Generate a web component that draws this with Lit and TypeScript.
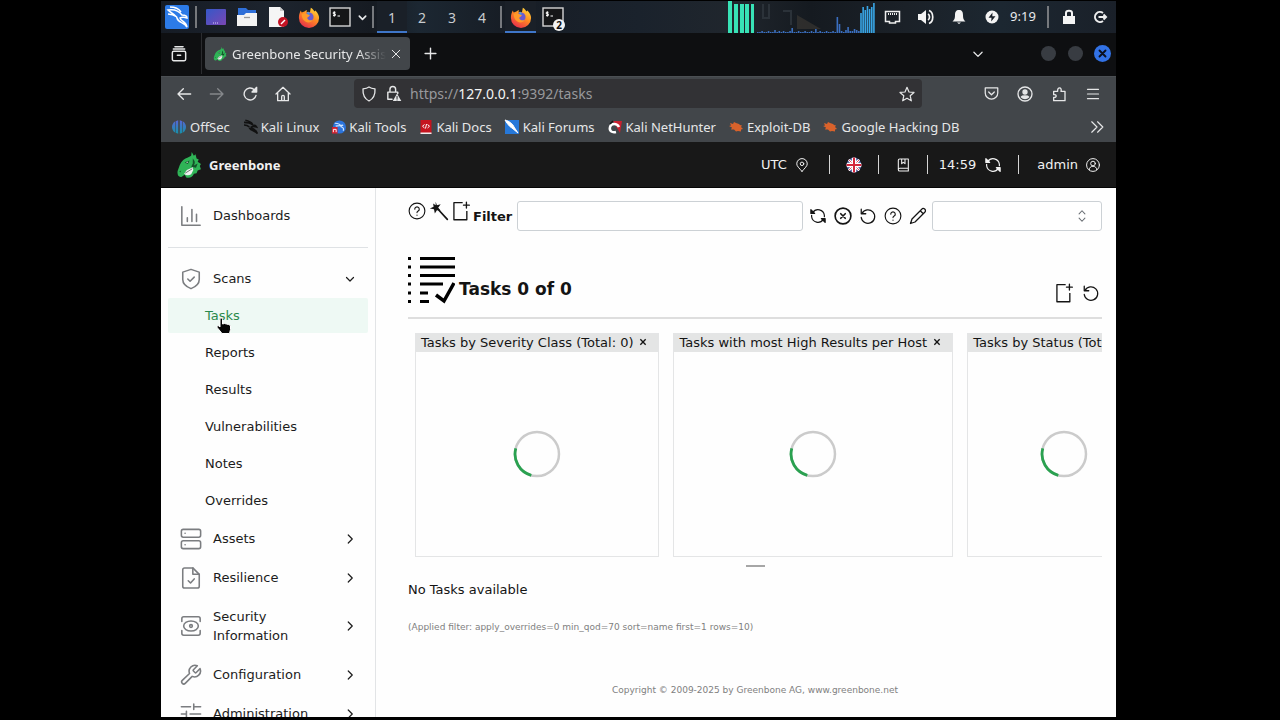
import { LitElement, html, svg, css, nothing } from "lit";
import { customElement, state } from "lit/decorators.js";
import { classMap } from "lit/directives/class-map.js";

const icon = (size: number, body: unknown, width = 2, box = "0 0 24 24", w = size) => html`
  <svg class="icon" width=${w} height=${size} viewBox=${box} fill="none" stroke="currentColor"
    stroke-width=${width} stroke-linecap="round" stroke-linejoin="round" aria-hidden="true">${body}</svg>`;

const chevronDown = svg`<path d="M5 9l7 7 7-7"/>`;
const chevronRight = svg`<path d="M8.500 4l8 8-8 8"/>`;
const refresh = svg`<path d="M20.500 13V11A8.500 8.500 0 0 0 5 7.500M3.500 11v2A8.500 8.500 0 0 0 19 16.500"/><path d="M2.500 3.500v5h5zM21.500 20.500v-5h-5z" fill="currentColor"/>`;
const reset = svg`<path d="M3 3v6h6"/><path d="M4 8.500a9 9 0 1 1-1 5.500"/>`;
const help = svg`<circle cx="12" cy="12" r="10.500"/><path d="M9 9.500a3 3 0 1 1 4.500 2.600c-1 .6-1.500 1-1.500 2M12 17.300v.4"/>`;
const newItem = svg`<path d="M14 2H3.500v20.500H19V12" stroke-linecap="butt"/><path d="M18.500 1.500v7M15 5h7"/>`;

const kaliDragon = svg`<path d="M3 5c5 0 10 1 13 4 3 0 5 1 6 3-3-1-6-1-8 0 1 4 8 3 9 10-3-5-10-4-12-9M5 2c5 1 9 3 11 6M3 9c3 0 6 1 8 3" fill="none"/>`;

const firefox = html`
  <svg class="icon" width="22" height="22" viewBox="0 0 24 24" aria-hidden="true">
    <defs>
      <linearGradient id="ff" x1=".8" y1="0" x2=".2" y2="1">
        <stop offset="0" stop-color="#ffd83c"/><stop offset=".45" stop-color="#ff8a22"/><stop offset="1" stop-color="#e5264f"/>
      </linearGradient>
    </defs>
    <path fill="url(#ff)" d="M3 5l1 2 3-1c1-1 2-1.500 3-1.500L9 7c1-1 3-1 4 0l1-5c2 1 3 3 4 4l1-1c3 3 4 6 4 8a11 11 0 0 1-22 0c0-3 .5-5 2-8z"/>
    <circle cx="12" cy="12" r="5" fill="#6a5bd0"/>
    <path fill="#ff9a2a" d="M4 9c2-2 5-1 7 0l2 1c-1 2-3 2-3 3 1 3 4 3 6 2-1 3-5 4-8 2S4 12 4 9z"/>
    <path fill="#3f9be8" d="M10 6.500l2 .2.800 2.500-2 .4z"/>
  </svg>`;

const terminal = html`
  <svg class="icon" width="22" height="20" viewBox="0 0 22 20" aria-hidden="true">
    <rect x="1" y="1" width="20" height="18" fill="#151618" stroke="#d4d4d4" stroke-width="1.400"/>
    <path d="M6.500 5.300H4.300v1.600h2v1.700H4M5.300 4.300v5.300M8.500 9h2.500" fill="none" stroke="#fff"/>
  </svg>`;

const barHeights = [1, 1, 2, 1, 1, 2, 1, 1, 3, 1, 2, 1, 2, 1, 1, 2, 5, 1, 1, 2, 1, 1, 2, 1, 1, 2, 1, 4, 1, 2, 1, 1, 2, 1, 1, 2, 1, 16, 9, 2, 1, 3, 6, 2, 2, 4, 3, 2, 20, 26, 23, 27, 24, 26, 30];

const bugIcon = html`
  <svg class="icon" width="16" height="16" viewBox="0 0 16 16" aria-hidden="true">
    <path fill="#d9622b" d="M2 4l3 1 1-2 2 1 3 1 1 1 2 .5-1 1.500 2 2-2 .5 0 2-3-.5-2 .5-2-2-3 0 1-2-3-1.500 2-.5z"/>
  </svg>`;

const bookmarks = [
  { label: "OffSec", art: html`<svg class="icon" width="16" height="16" viewBox="0 0 16 16"><defs><linearGradient id="os" x2="0" y2="1"><stop stop-color="#5865d8"/><stop offset="1" stop-color="#1592a8"/></linearGradient></defs><path fill="url(#os)" d="M4 2.500v11C0 11 0 5 4 2.500zM4.600 2.200l2.600-1v13.600l-2.600-1zM8.800 1.200l2.600 1v11.600l-2.600 1zM12 2.500c4 2.500 4 8.500 0 11z"/></svg>` },
  { label: "Kali Linux", art: html`<svg class="icon" width="16" height="16" viewBox="0 0 24 24" fill="none" stroke="#111" stroke-width="2.400">${kaliDragon}</svg>` },
  { label: "Kali Tools", art: html`<svg class="icon" width="15" height="16" viewBox="0 0 16 16"><circle cx="9" cy="8" r="7" fill="#2b74dc"/><path d="M4 4c4 0 6 1 7 4 2 0 3 2 2 4M5 7c3-1 5 0 8-1" fill="none" stroke="#cfe4ff" stroke-width="1.300"/><path fill="#d1202f" d="M1 8h6v7H1z"/><path d="M2.500 13.500v-3h3v3" fill="none" stroke="#fff"/></svg>` },
  { label: "Kali Docs", art: html`<svg class="icon" width="15" height="16" viewBox="0 0 14 16"><path fill="#c5141f" d="M2 1h11v14H2z"/><path fill="#eee" d="M2 13.500h11V15H2z"/><path d="M6 5.500L4 7.200 6 9M9 5.500l2 1.700L9 9M8 5L7 9.500" fill="none" stroke="#fff"/></svg>` },
  { label: "Kali Forums", art: html`<svg class="icon" width="16" height="16" viewBox="0 0 16 16"><path fill="#2678d9" d="M1 1h14v14H1z"/><path d="M1 1c4 1 8 4 9 7l4 6-6-5C6 8 4 6 1 1z" fill="#fff" stroke="#fff"/></svg>` },
  { label: "Kali NetHunter", art: html`<svg class="icon" width="16" height="16" viewBox="0 0 16 16"><path fill="#c8202f" d="M6 2h9l-2 12z"/><path d="M12 8C10 4 4 4 3 8s2 6 6 5" fill="none" stroke="#fff" stroke-width="2.500"/><path d="M3 5l3-3" stroke="#111" stroke-width="1.500"/></svg>` },
  { label: "Exploit-DB", art: bugIcon },
  { label: "Google Hacking DB", art: bugIcon },
];

const greenboneLogo = (size: number) => html`
  <svg class="icon" width=${size} height=${size} viewBox="0 0 24 24" aria-hidden="true">
    <path fill="#2fb457" d="M14.500 0l2 3.500L18 2l1 4 2 1-1 2 3 2-1 2 1 3-3 1-1 2.500-2.500.5c-1 3-4 4.500-7 3.500L8 21l-3 2c-3 .5-4-2.500-3.500-5.500L3.500 12C5 8 8 6 11 5l3-1.500z"/>
    <path fill="#14522a" d="M15.500 6c2 2 2.500 4 1 6.500l3.500-2-1.500 4-4.500-1 1.500-3z"/>
    <path fill="#14522a" d="M8 9.800l4.500-2-1.500 3.200z"/>
    <path fill="#fff" d="M9.300 9.600l2-.9-.9 1.500z"/>
    <path fill="#f0f0f0" d="M7.500 20l2.500-3.500 5.500-2.500.5 2.500-2 4c-2 1.500-4.500 1.500-6.500-.5z"/>
    <path d="M8.500 19.500l6.500-4" stroke="#5a6a60" stroke-width=".8"/>
    <path fill="#14522a" d="M3 18l1.800-1-.8 2z"/>
  </svg>`;

const scanPages = ["Tasks", "Reports", "Results", "Vulnerabilities", "Notes", "Overrides"];

const sections = [
  { label: "Assets", art: svg`<rect x="1.500" y="1.500" width="21" height="8.500" rx="2"/><rect x="1.500" y="14" width="21" height="8.500" rx="2"/><path d="M5.500 5.800h.1M5.500 18.300h.1"/>` },
  { label: "Resilience", art: svg`<path d="M14 1H5a2 2 0 0 0-2 2v18a2 2 0 0 0 2 2h14a2 2 0 0 0 2-2V8z"/><path d="M14 1v7h7M9 15l2.500 2.500L15.500 13"/>` },
  { label: "Security Information", art: svg`<path d="M2 7V4a2 2 0 0 1 2-2h16a2 2 0 0 1 2 2v3M2 17v3a2 2 0 0 0 2 2h16a2 2 0 0 0 2-2v-3"/><ellipse cx="12" cy="12" rx="8" ry="5.500"/><circle cx="12" cy="12" r="1.500"/>` },
  { label: "Configuration", art: svg`<path d="M14.700 6.300a1 1 0 0 0 0 1.400l1.600 1.600a1 1 0 0 0 1.400 0l4.200-4.200a6.500 6.500 0 0 1-8.600 8.400l-7.600 7.600a2.100 2.100 0 0 1-3.200-3.200l7.900-7.600a6.500 6.500 0 0 1 8.500-8.400z"/>` },
  { label: "Administration", art: svg`<path d="M1.500 4h10M15 4h7.500M15 1v6M1.500 12H7M11 12h11.500M7 9v6M1.500 20h13M18 20h4.500M18 17v6"/>` },
];

const charts = [
  "Tasks by Severity Class (Total: 0)",
  "Tasks with most High Results per Host",
  "Tasks by Status (Total: 0)",
];

@customElement("desktop-panel")
export class DesktopPanel extends LitElement {
  static styles = css`
    :host { display: flex; align-items: stretch; height: 32px; flex: none; color: #e8eaec; overflow: hidden; font: 14px "Noto Sans", sans-serif;
      background: linear-gradient(90deg, #161c25 0, #1d242e 12%, #161b22 22%, #1c2732 27%, #171d25 36%, #1a222c 50%, #20262d 60%, #151a20 68%, #1b2128 78%, #1c2731 88%, #1a2029 100%); }
    button { display: flex; align-items: center; justify-content: center; position: relative; border: 0; padding: 0; background: none; color: inherit; font: inherit; }
    .cell { width: 31px; }
    .narrow { width: 14px; }
    .desk { width: 30px; color: #c9ccd0; }
    .tray { width: 33px; }
    .active { box-shadow: inset 0 -2px #3f76c8; background: #1a2028; }
    .sep { width: 2px; margin: 5px 3px; background: #76797d; }
    .space { flex: 1; }
    .icon { display: block; flex: none; }
    .badge { position: absolute; right: 4px; bottom: 2px; width: 12px; height: 12px; border-radius: 6px; background: #f4f4f4; color: #111; font-size: 10px; line-height: 12px; font-weight: 700; }
    time { width: 30px; margin-right: 6px; text-align: center; line-height: 31px; font-size: 13px; }
  `;
  render() {
    return html`
      <button class="cell" aria-label="Applications">
        <svg class="icon" width="26" height="26" viewBox="0 0 26 26"><rect x="1" y="1" width="24" height="24" rx="2" fill="#2c7be8"/><path d="M4 6c6-1 11 1 14 5 3 0 5 1 5 3-3-1-5-1-7 0 0 3 6 3 7 9-3-5-9-4-10-9-1-3-6-5-9-8zM6 3c5 0 9 2 11 5M4 10c4 0 6 1 9 3" fill="none" stroke="#fff" stroke-width="1.500"/></svg>
      </button>
      <span class="sep"></span>
      <button class="cell" aria-label="Show desktop">
        <svg class="icon" width="22" height="18" viewBox="0 0 22 18"><defs><linearGradient id="sd" x2="1" y2="1"><stop stop-color="#3558c8"/><stop offset="1" stop-color="#7a46b4"/></linearGradient></defs><rect x="1" y="1" width="20" height="16" rx="1" fill="url(#sd)"/><path d="M8 15h6" stroke="#d8d0ff" stroke-dasharray="1 1"/></svg>
      </button>
      <button class="cell" aria-label="Files">
        <svg class="icon" width="22" height="20" viewBox="0 0 22 20"><path fill="#2f6fd8" d="M2 1h8l2 2h8v8H2z"/><path fill="#f3f3f3" d="M1 8h7l2-2h11v13H1z"/><path d="M8 10.500h6" stroke="#999" stroke-width="1.300"/></svg>
      </button>
      <button class="cell" aria-label="Text editor">
        <svg class="icon" width="20" height="22" viewBox="0 0 20 22"><path fill="#f5f5f5" d="M1 1h11l4 4v16H1z"/><path fill="#c9c9c9" d="M12 1l4 4h-4z"/><circle cx="15" cy="16" r="5" fill="#c41324"/><path d="M13 18l4-4" stroke="#fff" stroke-width="1.500"/></svg>
      </button>
      <button class="cell" aria-label="Firefox">${firefox}</button>
      <button class="cell" aria-label="Terminal">${terminal}</button>
      <button class="narrow" aria-label="More terminals">${icon(11, chevronDown, 3.5)}</button>
      <span class="sep"></span>
      ${[1, 2, 3, 4].map((n) => html`<button class=${classMap({ desk: true, active: n === 1 })}>${n}</button>`)}
      <span class="sep"></span>
      <button class="cell active" aria-label="Firefox window">${firefox}</button>
      <button class="tray" aria-label="Terminal windows">${terminal}<span class="badge">2</span></button>
      <span class="space"></span>
      <svg class="icon" width="149" height="32" viewBox="0 0 149 32" aria-hidden="true">
        <path fill="#38e2b6" d="M1 0h4v32H1zM7 3h4v29H7zM13 3h4v29h-4zM18 3h4v29h-4zM24 3h3v29h-3z"/>
        <path d="M36 3v14h6V3M56 10h8v14" fill="none" stroke="#2b3239" stroke-width="2"/>
        <path fill="#463f38" opacity=".5" d="M70 14l24 14H70z"/>
        ${barHeights.map((h, i) => svg`<rect x=${30 + i * 2.15} y=${32 - h} width="1.600" height=${h} fill=${h > 18 ? "#39a6e6" : "#3b6fc0"}/>`)}
      </svg>
      <button class="tray" aria-label="Network">
        <svg class="icon" width="17" height="15" viewBox="0 0 17 15"><path d="M1.500 1.500h14v10h-4v1.500h-6v-1.500h-4z" fill="none" stroke="#eee" stroke-width="1.500"/><path d="M4 4h9" stroke="#eee" stroke-width="2" stroke-dasharray="1 1"/></svg>
      </button>
      <button class="tray" aria-label="Volume">
        <svg class="icon" width="18" height="16" viewBox="0 0 18 16"><path fill="#f4f4f4" d="M1 5h3l5-4v14l-5-4H1z"/><path d="M11 5c2 1 2 5 0 6M12 1.500c5 2 5 11 0 13" fill="none" stroke="#f4f4f4" stroke-width="1.700"/></svg>
      </button>
      <button class="tray" aria-label="Notifications">
        <svg class="icon" width="14" height="16" viewBox="0 0 14 16"><path fill="#f4f4f4" d="M7 1c3 0 4 2 4 5 0 4 1 5 2.500 6.500H.5C2 11 3 10 3 6c0-3 1-5 4-5zM5 13.500h4L7 15z"/></svg>
      </button>
      <button class="tray" aria-label="Power">
        <svg class="icon" width="14" height="14" viewBox="0 0 14 14"><circle cx="7" cy="7" r="6.500" fill="#f4f4f4"/><path fill="#1a2028" d="M7.500 2.500L3.500 7.800h3L6.200 11.500l4.300-5.300H7.300z"/></svg>
      </button>
      <time>9:19</time>
      <span class="sep"></span>
      <button class="tray" aria-label="Lock">
        <svg class="icon" width="14" height="16" viewBox="0 0 14 16"><path fill="#f4f4f4" d="M1 7h12v8H1z"/><path d="M4 8V4c0-3 6-3 6 0v4" fill="none" stroke="#f4f4f4" stroke-width="2"/></svg>
      </button>
      <button class="cell" aria-label="Log out">
        <svg class="icon" width="15" height="14" viewBox="0 0 15 14"><path d="M10 3a5 5 0 1 0 0 8M5.500 7H13M10.500 4.500L13 7l-2.500 2.500" fill="none" stroke="#eee" stroke-width="2"/></svg>
      </button>`;
  }
}

@customElement("browser-chrome")
export class BrowserChrome extends LitElement {
  static styles = css`
    :host { display: block; flex: none; font: 13px "Noto Sans", sans-serif; color: #e6e7e8; }
    button { display: flex; align-items: center; justify-content: center; border: 0; padding: 0; background: none; color: inherit; font: inherit; }
    .icon { display: block; flex: none; }
    .tabs { display: flex; align-items: center; height: 43px; padding-bottom: 2px; box-sizing: border-box; background: #0e0f11; }
    .history { align-self: stretch; width: 41px; border-right: 1px solid #2b2c2f; padding-right: 4px; margin-right: 3px; }
    .tab { display: flex; align-items: center; width: 205px; height: 33px; border-radius: 4px; background: #42464a; box-sizing: border-box; padding: 0 9px 0 8px; gap: 5px; }
    .title { flex: 1; min-width: 0; overflow: hidden; white-space: nowrap; -webkit-mask-image: linear-gradient(90deg, #000 82%, transparent); mask-image: linear-gradient(90deg, #000 82%, transparent); }
    .new { width: 40px; height: 33px; }
    .space { flex: 1; }
    .list { width: 28px; margin-right: 43px; }
    .win { width: 27px; }
    .dot { width: 15px; height: 15px; border-radius: 8px; background: #383c42; }
    .dot.close { display: flex; align-items: center; justify-content: center; width: 17px; height: 17px; border-radius: 9px; background: #3272e6; color: #0a1020; }
    .nav { display: flex; align-items: center; height: 36px; background: #42464a; padding: 0 6px 1px; box-shadow: inset 0 1px #4b4f53; box-sizing: border-box; }
    .tool { width: 33px; height: 29px; }
    .right .tool { width: 34px; }
    .right { display: flex; }
    .dim { color: #85888b; }
    .address { flex: 1; min-width: 0; display: flex; align-items: center; gap: 8px; height: 29px; margin: 0 52px 0 55px; padding: 0 7px; border-radius: 4px; background: #323235; box-sizing: border-box; }
    .url { flex: 1; color: #98999c; font-size: 14px; white-space: nowrap; }
    .url b { font-weight: 400; color: #f4f4f4; }
    .marks { display: flex; align-items: center; gap: 12px; height: 30px; padding: 0 12px 1px 10px; box-sizing: border-box; background: #42464a; }
    .marks a { display: flex; align-items: center; gap: 3px; color: inherit; text-decoration: none; white-space: nowrap; }
  `;
  render() {
    return html`
      <div class="tabs">
        <button class="history" aria-label="Recent browsing">${icon(16, svg`<rect x="2" y="8" width="20" height="14" rx="2"/><path d="M3.500 4.500h17M6 1h12M9.500 14h5"/>`, 2.2)}</button>
        <div class="tab">
          ${greenboneLogo(14)}<span class="title">Greenbone Security Assistant</span>
          <button aria-label="Close tab">${icon(10, svg`<path d="M3 3l18 18M21 3L3 21"/>`, 2.4)}</button>
        </div>
        <button class="new" aria-label="New tab">${icon(13, svg`<path d="M12 2v20M2 12h20"/>`, 2.6)}</button>
        <span class="space"></span>
        <button class="list" aria-label="List all tabs">${icon(14, chevronDown, 2.2)}</button>
        <button class="win" aria-label="Minimize"><span class="dot"></span></button>
        <button class="win" aria-label="Maximize"><span class="dot"></span></button>
        <button class="win" aria-label="Close"><span class="dot close">${icon(9, svg`<path d="M4 4l16 16M20 4L4 20"/>`, 5)}</span></button>
      </div>
      <div class="nav">
        <button class="tool" aria-label="Back">${icon(16, svg`<path d="M22 12H3M11 4l-8 8 8 8"/>`, 2)}</button>
        <button class="tool dim" aria-label="Forward">${icon(16, svg`<path d="M2 12h19M13 4l8 8-8 8"/>`, 2)}</button>
        <button class="tool" aria-label="Reload">${icon(16, svg`<path d="M21 14a9 9 0 1 1-2.500-8.500L21 8"/><path d="M22 2v7h-7z" fill="currentColor"/>`, 2)}</button>
        <button class="tool" aria-label="Home">${icon(16, svg`<path d="M1.500 12L12 2l10.500 10M4 10.500V22h16V10.500M10 22v-6a2 2 0 0 1 4 0v6"/>`, 2)}</button>
        <div class="address">
          ${icon(16, svg`<path d="M12 1.500c3 2 6 2.500 9 2.800C21.500 13 19 19 12 22.500 5 19 2.500 13 3 4.300c3-.3 6-.8 9-2.800z"/>`, 2)}
          ${icon(17, svg`<path d="M10 20H4V10h14v2M7 10V6a4 4 0 0 1 8 0v4"/><path d="M17 12l6 10.500H11z" fill="currentColor" stroke="none"/><path d="M17 16v3M17 20.800v.2" stroke="#323235" stroke-width="1.500"/>`, 2)}
          <span class="url">https://<b>127.0.0.1</b>:9392/tasks</span>
          <button aria-label="Bookmark this page">${icon(16, svg`<path d="M12 2l3 7 7.500.7-5.700 5 1.700 7.500L12 18.300 5.500 22.200l1.700-7.500-5.700-5L9 9z"/>`, 1.8)}</button>
        </div>
        <div class="right">
          <button class="tool" aria-label="Pocket">${icon(15, svg`<path d="M2 3h20v8a10 10 0 0 1-20 0z"/><path d="M7.500 9.500L12 14l4.500-4.500"/>`, 2)}</button>
          <button class="tool" aria-label="Account">${icon(16, svg`<circle cx="12" cy="12" r="10.500"/><circle cx="12" cy="9" r="3" fill="currentColor"/><path d="M6.500 16.500c1-2 10-2 11 0-2 3-9 3-11 0z" fill="currentColor"/>`, 2)}</button>
          <button class="tool" aria-label="Extensions">${icon(16, svg`<path d="M4 22V17c5 1 5-5 0-4V8h6C9 1 17 1 15 8h6v14z"/>`, 2)}</button>
          <button class="tool" aria-label="Menu">${icon(14, svg`<path d="M2.500 4h19M2.500 12h19M2.500 20h19"/>`, 2)}</button>
        </div>
      </div>
      <div class="marks">
        ${bookmarks.map((b) => html`<a href="#">${b.art}${b.label}</a>`)}
        <span class="space"></span>
        <button aria-label="More bookmarks">${icon(14, svg`<path d="M3 3l9 9-9 9M13 3l9 9-9 9"/>`, 2)}</button>
      </div>`;
  }
}

@customElement("gsa-sidebar")
export class GsaSidebar extends LitElement {
  static styles = css`
    :host { display: block; flex: none; width: 214px; box-sizing: content-box; border-right: 1px solid #e2e4e6; overflow: hidden; }
    nav { padding: 8px 7px 0; font-size: 13px; line-height: 19px; }
    a { display: flex; align-items: center; color: #1c1c1c; text-decoration: none; }
    .item { min-height: 39px; padding: 8px 12px; gap: 11px; box-sizing: border-box; }
    .item .icon { display: block; flex: none; }
    .lead { color: #7b7d80; display: flex; flex: none; }
    .label { flex: 1; max-width: 110px; padding: 2px 0; }
    .arrow { margin-left: auto; display: flex; }
    hr { border: 0; border-top: 1px solid #dfe2e5; margin: 12px 0 11px; }
    ul { list-style: none; margin: 0; padding: 0 0 1px; display: grid; gap: 2px; }
    .sub { height: 35px; padding-left: 37px; border-radius: 2px; }
    .current { background: #eef9f4; color: #2b8a4c; }
    li { position: relative; }
    .pointer { position: absolute; left: 48px; top: 19px; }
  `;
  @state() private open = true;
  render() {
    return html`
      <nav>
        <a class="item" href="#"><span class="lead">${icon(22, svg`<path d="M2 2v20h20M8 18v-4M13 18V5M18 18v-8"/>`, 1.7)}</span><span class="label">Dashboards</span></a>
        <hr>
        <a class="item" href="#" @click=${() => (this.open = !this.open)}>
          <span class="lead">${icon(22, svg`<path d="M12 1.500l9 3v8c0 5-4 8-9 10-5-2-9-5-9-10v-8z"/><path d="M8.500 12l2.500 2.500 4.500-4.500"/>`, 1.7)}</span>
          <span class="label">Scans</span><span class="arrow">${icon(12, chevronDown, 2.4)}</span>
        </a>
        ${this.open ? html`<ul>${scanPages.map((p, i) => html`
          <li><a href="#" class=${classMap({ sub: true, current: i === 0 })}>${p}</a>
          ${i === 0 ? html`<svg class="pointer" width="17" height="18" viewBox="0 0 17 18" aria-hidden="true"><path fill="#050505" stroke="#fff" stroke-width="1" d="M4 1.500c1-1 2.500 0 2.500 1V7l2-.5 2 .5 2 .5 2 1v4l-1 4H6l-4-5c-2-2-.5-3.500 1-2.500l1 1z"/></svg>` : nothing}</li>`)}</ul>` : nothing}
        ${sections.map((s) => html`<a class="item" href="#"><span class="lead">${icon(22, s.art, 1.7)}</span><span class="label">${s.label}</span><span class="arrow">${icon(12, chevronRight, 2.4)}</span></a>`)}
      </nav>`;
  }
}

@customElement("app-root")
export class AppRoot extends LitElement {
  static styles = css`
    :host { display: flex; flex-direction: column; height: 100vh; box-sizing: border-box; padding: 1px 164px 3px 161px; background: #000; overflow: hidden; font-family: "DejaVu Sans", sans-serif; font-size: 13px; color: #141414; }
    button { display: flex; align-items: center; justify-content: center; border: 0; padding: 0; background: none; color: inherit; font: inherit; }
    .icon { display: block; flex: none; }
    header { display: flex; align-items: center; flex: none; height: 46px; padding: 0 16px 0 15px; background: #181818; color: #f1f1f1; border-bottom: 1px solid #050505; box-sizing: border-box; }
    .brand { display: flex; align-items: center; gap: 7px; font: 700 13px "Noto Sans", sans-serif; }
    .session { display: flex; align-items: center; margin-left: auto; }
    .session > * { display: flex; align-items: center; gap: 8px; }
    .session > * + * { border-left: 1px solid #d5d5d5; height: 19px; }
    .tz { padding-right: 20px; }
    .pad { padding: 0 16px; }
    .clock { padding: 0 16px 0 11px; }
    .user { padding-left: 18px; }
    .body { display: flex; flex: 1; min-height: 0; background: #fefefe; }
    main { flex: 1; min-width: 0; padding: 13px 14px 0 32px; display: flex; flex-direction: column; }
    .filter { display: flex; align-items: center; height: 30px; }
    .aids { display: flex; gap: 3px; align-self: flex-start; padding-right: 3px; }
    .filter label { font-weight: 700; margin-right: 5px; }
    .filter input { flex: 1; min-width: 0; height: 30px; border: 1px solid #ccd1d5; border-radius: 3px; box-sizing: border-box; background: #fff; padding: 0 8px; font: inherit; }
    .actions { display: flex; gap: 7px; padding: 0 5px 0 6px; }
    .pick { position: relative; flex: none; width: 170px; height: 30px; }
    .pick select { appearance: none; width: 100%; height: 100%; border: 1px solid #ccd1d5; border-radius: 3px; background: #fff; font: inherit; }
    .pick .icon { position: absolute; right: 13px; top: 8px; color: #6a6f74; pointer-events: none; }
    .heading { display: flex; align-items: flex-end; gap: 4px; height: 75px; padding-bottom: 13px; border-bottom: 2px solid #dedede; box-sizing: border-box; margin-top: 13px; }
    h1 { margin: 0; font-size: 17px; line-height: 30px; font-weight: 700; }
    .tools { display: flex; gap: 9px; margin-left: auto; padding: 0 2px 1px 0; }
    .charts { display: flex; gap: 14px; padding: 14px 0 0 7px; overflow: hidden; height: 238px; flex: none; box-sizing: border-box; }
    .card { display: flex; flex-direction: column; flex: none; border: 1px solid #e4e5e6; box-sizing: border-box; height: 224px; }
    .card h2 { display: flex; align-items: center; gap: 6px; height: 18px; margin: 0; padding: 0 11px 2px 5px; box-sizing: border-box; background: #e4e5e5; font-size: 13px; font-weight: 400; white-space: nowrap; }
    .spin { flex: 1; display: flex; align-items: center; justify-content: center; }
    .grip { align-self: center; flex: none; width: 19px; height: 2px; background: #a6a6a6; margin-top: 8px; }
    .empty { margin: 14px 0 0; line-height: 18px; }
    .applied { margin: 21px 0 0; font-size: 9px; line-height: 14px; color: #808080; }
    footer { margin-top: 49px; text-align: center; font-size: 9px; line-height: 14px; color: #808080; }
  `;
  render() {
    return html`
      <desktop-panel></desktop-panel>
      <browser-chrome></browser-chrome>
      <header>
        <div class="brand">${greenboneLogo(26)}Greenbone</div>
        <div class="session">
          <span class="tz">UTC ${icon(14, svg`<path d="M12 23c-5-6-9-9-9-13a9 9 0 0 1 18 0c0 4-4 7-9 13z"/><circle cx="12" cy="10" r="3"/>`, 1.7)}</span>
          <button class="pad" aria-label="Language">
            <svg class="icon" width="16" height="16" viewBox="0 0 16 16"><defs><clipPath id="r"><circle cx="8" cy="8" r="7.500"/></clipPath></defs><g clip-path="url(#r)"><path fill="#34458c" d="M0 0h16v16H0z"/><path d="M1 1l14 14M15 1L1 15" stroke="#fff" stroke-width="2.500"/><path d="M1 1l14 14M15 1L1 15" stroke="#d4283c" stroke-width=".8"/><path d="M8 0v16M0 8h16" stroke="#fff" stroke-width="4.500"/><path d="M8 0v16M0 8h16" stroke="#d4283c" stroke-width="2"/></g></svg>
          </button>
          <button class="pad" aria-label="Manual">${icon(16, svg`<path d="M5 19V5a2 2 0 0 1 2-2h13v18H7a2 2 0 0 1 0-4h13M10 3v7l2.500-2L15 10V3"/>`, 1.6)}</button>
          <span class="clock">14:59 ${icon(18, refresh, 1.6)}</span>
          <span class="user">admin ${icon(14, svg`<circle cx="12" cy="12" r="11"/><circle cx="12" cy="9.500" r="4"/><path d="M5.500 20c0-8 13-8 13 0"/>`, 1.7)}</span>
        </div>
      </header>
      <div class="body">
        <gsa-sidebar></gsa-sidebar>
        <main>
          <div class="filter">
            <div class="aids">
              <button aria-label="Help">${icon(18, help, 1.5)}</button>
              <button aria-label="Task wizard">${icon(20, svg`<path d="M10 9l12 13" stroke-width="2"/><path d="M8 1l1.500 4L14 4l-3 4 3 3.500-4.500-.5L7 15l-1-5-5-1 4.500-2L5 3l3 2z" fill="currentColor" stroke="none"/>`)}</button>
              <button aria-label="New task">${icon(20, newItem, 1.6, "2 0 20 24", 18)}</button>
            </div>
            <label for="filter">Filter</label>
            <input id="filter" type="text">
            <div class="actions">
              <button aria-label="Update filter">${icon(18, refresh, 1.6)}</button>
              <button aria-label="Remove filter">${icon(18, svg`<circle cx="12" cy="12" r="10.500"/><path d="M9 9l6 6M15 9l-6 6"/>`, 2.2)}</button>
              <button aria-label="Reset filter">${icon(18, reset, 1.7)}</button>
              <button aria-label="Filter help">${icon(18, help, 1.5)}</button>
              <button aria-label="Edit filter">${icon(18, svg`<path d="M2 22l2-6L17 3c2-3 7 1 4 4L8 20zM15 5l4 4"/>`, 1.7)}</button>
            </div>
            <div class="pick">
              <select aria-label="Saved filter"><option></option></select>
              ${icon(14, svg`<path d="M7 8.500L12 3l5 5.500M7 15.500l5 5.500 5-5.500"/>`, 1.8)}
            </div>
          </div>
          <div class="heading">
            <svg class="icon" width="47" height="48" viewBox="0 0 47 48" aria-hidden="true">
              <path d="M0 2.500h3M12 2.500h35M0 11h3M12 11h35M0 19.500h3M12 19.500h35M0 28h3M12 28h23M0 37h3M12 37h8M0 45.500h3M12 45.500h9" stroke="#000" stroke-width="3"/>
              <path d="M28 39l8 6 10-18" fill="none" stroke="#000" stroke-width="3.500"/>
            </svg>
            <h1>Tasks 0 of 0</h1>
            <div class="tools">
              <button aria-label="New task">${icon(20, newItem, 1.6, "2 0 20 24", 18)}</button>
              <button aria-label="Reset to defaults">${icon(18, reset, 1.7)}</button>
            </div>
          </div>
          <div class="charts">
            ${charts.map((title) => html`
              <section class="card">
                <h2>${title}<button aria-label="Remove chart">${icon(8, svg`<path d="M4 4l16 16M20 4L4 20" stroke-linecap="butt"/>`, 4)}</button></h2>
                <div class="spin"><svg class="icon" width="48" height="48" viewBox="0 0 48 48" aria-hidden="true"><circle cx="24" cy="24" r="22" fill="none" stroke="#cbcbcb" stroke-width="2.500"/><path d="M2.800 18.300A22 22 0 0 0 18.300 45.300" fill="none" stroke="#2aa150" stroke-width="2.800"/></svg></div>
              </section>`)}
          </div>
          <span class="grip"></span>
          <p class="empty">No Tasks available</p>
          <p class="applied">(Applied filter: apply_overrides=0 min_qod=70 sort=name first=1 rows=10)</p>
          <footer>Copyright © 2009-2025 by Greenbone AG, www.greenbone.net</footer>
        </main>
      </div>`;
  }
}
